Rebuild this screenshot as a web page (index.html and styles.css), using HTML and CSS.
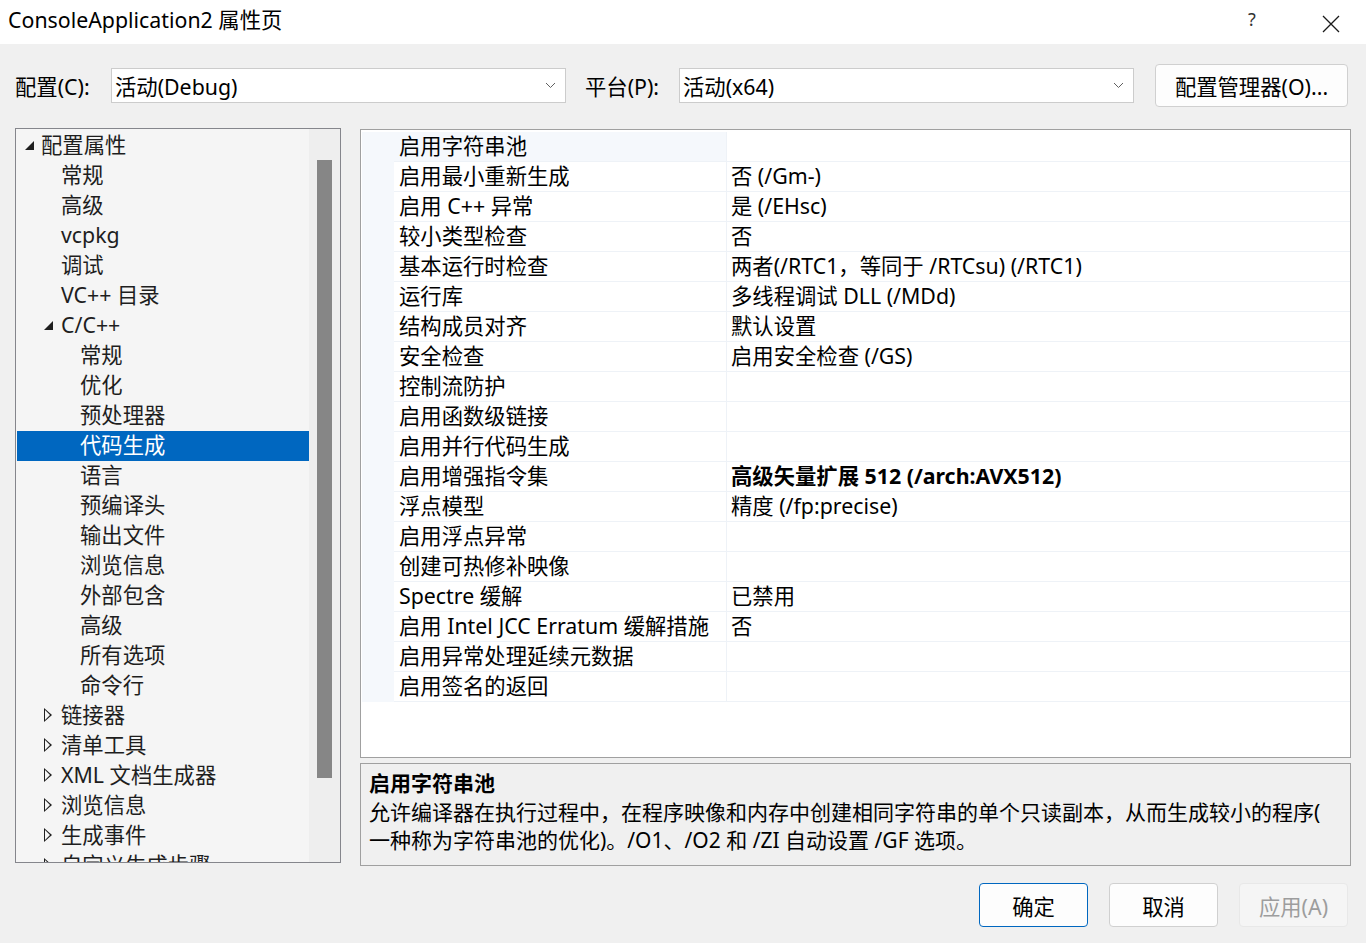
FILE: index.html
```html
<!DOCTYPE html>
<html lang="zh-CN">
<head>
<meta charset="utf-8">
<title>ConsoleApplication2 属性页</title>
<link rel="stylesheet" href="styles.css">
</head>
<body>
<div class="titlebar">
  <div class="title">ConsoleApplication2 属性页</div>
  <div class="tb-help">?</div>
  <div class="tb-close"><svg width="18" height="18" viewBox="0 0 18 18"><path d="M1 1 L17 17 M17 1 L1 17" stroke="#1a1a1a" stroke-width="1.3" fill="none"/></svg></div>
</div>

<div class="configrow">
  <div class="lbl lbl1">配置(C):</div>
  <div class="combo"><span>活动(Debug)</span><svg class="chev" width="11" height="7" viewBox="0 0 11 7"><path d="M1 1 L5.5 5.5 L10 1" stroke="#606060" stroke-width="1" fill="none"/></svg></div>
  <div class="lbl lbl2">平台(P):</div>
  <div class="combo"><span>活动(x64)</span><svg class="chev" width="11" height="7" viewBox="0 0 11 7"><path d="M1 1 L5.5 5.5 L10 1" stroke="#606060" stroke-width="1" fill="none"/></svg></div>
  <button class="btn cfgmgr">配置管理器(O)...</button>
</div>

<div class="main">
  <div class="tree">
    <div class="tree-list">
      <div class="ti l0"><span class="exp"></span>配置属性</div>
      <div class="ti l1">常规</div>
      <div class="ti l1">高级</div>
      <div class="ti l1">vcpkg</div>
      <div class="ti l1">调试</div>
      <div class="ti l1">VC++ 目录</div>
      <div class="ti l1e"><span class="exp"></span>C/C++</div>
      <div class="ti l2">常规</div>
      <div class="ti l2">优化</div>
      <div class="ti l2">预处理器</div>
      <div class="ti l2 sel">代码生成</div>
      <div class="ti l2">语言</div>
      <div class="ti l2">预编译头</div>
      <div class="ti l2">输出文件</div>
      <div class="ti l2">浏览信息</div>
      <div class="ti l2">外部包含</div>
      <div class="ti l2">高级</div>
      <div class="ti l2">所有选项</div>
      <div class="ti l2">命令行</div>
      <div class="ti l1e"><span class="col"></span>链接器</div>
      <div class="ti l1e"><span class="col"></span>清单工具</div>
      <div class="ti l1e"><span class="col"></span>XML 文档生成器</div>
      <div class="ti l1e"><span class="col"></span>浏览信息</div>
      <div class="ti l1e"><span class="col"></span>生成事件</div>
      <div class="ti l1e"><span class="col"></span>自定义生成步骤</div>
    </div>
    <div class="vscroll"><div class="thumb"></div></div>
  </div>

  <div class="rightcol">
    <div class="grid">
      <div class="row first"><div class="gut"></div><div class="name">启用字符串池</div><div class="val"></div></div>
      <div class="row"><div class="gut"></div><div class="name">启用最小重新生成</div><div class="val">否 (/Gm-)</div></div>
      <div class="row"><div class="gut"></div><div class="name">启用 C++ 异常</div><div class="val">是 (/EHsc)</div></div>
      <div class="row"><div class="gut"></div><div class="name">较小类型检查</div><div class="val">否</div></div>
      <div class="row"><div class="gut"></div><div class="name">基本运行时检查</div><div class="val">两者(/RTC1，等同于 /RTCsu) (/RTC1)</div></div>
      <div class="row"><div class="gut"></div><div class="name">运行库</div><div class="val">多线程调试 DLL (/MDd)</div></div>
      <div class="row"><div class="gut"></div><div class="name">结构成员对齐</div><div class="val">默认设置</div></div>
      <div class="row"><div class="gut"></div><div class="name">安全检查</div><div class="val">启用安全检查 (/GS)</div></div>
      <div class="row"><div class="gut"></div><div class="name">控制流防护</div><div class="val"></div></div>
      <div class="row"><div class="gut"></div><div class="name">启用函数级链接</div><div class="val"></div></div>
      <div class="row"><div class="gut"></div><div class="name">启用并行代码生成</div><div class="val"></div></div>
      <div class="row"><div class="gut"></div><div class="name">启用增强指令集</div><div class="val bold">高级矢量扩展 512 (/arch:AVX512)</div></div>
      <div class="row"><div class="gut"></div><div class="name">浮点模型</div><div class="val">精度 (/fp:precise)</div></div>
      <div class="row"><div class="gut"></div><div class="name">启用浮点异常</div><div class="val"></div></div>
      <div class="row"><div class="gut"></div><div class="name">创建可热修补映像</div><div class="val"></div></div>
      <div class="row"><div class="gut"></div><div class="name">Spectre 缓解</div><div class="val">已禁用</div></div>
      <div class="row"><div class="gut"></div><div class="name">启用 Intel JCC Erratum 缓解措施</div><div class="val">否</div></div>
      <div class="row"><div class="gut"></div><div class="name">启用异常处理延续元数据</div><div class="val"></div></div>
      <div class="row"><div class="gut"></div><div class="name">启用签名的返回</div><div class="val"></div></div>
    </div>
    <div class="desc">
      <div class="desc-title">启用字符串池</div>
      <div class="desc-line">允许编译器在执行过程中，在程序映像和内存中创建相同字符串的单个只读副本，从而生成较小的程序(</div>
      <div class="desc-line">一种称为字符串池的优化)。/O1、/O2 和 /ZI 自动设置 /GF 选项。</div>
    </div>
  </div>
</div>

<div class="buttons">
  <button class="btn dlg ok">确定</button>
  <button class="btn dlg">取消</button>
  <button class="btn dlg disabled">应用(A)</button>
</div>
</body>
</html>
```
FILE: styles.css
```css
html, body {
  margin: 0;
  padding: 0;
}
body {
  width: 1366px;
  height: 943px;
  background: #f0f0f0;
  font-family: "Noto Sans", "Noto Sans CJK SC", sans-serif;
  font-size: 21.33px;
  color: #000;
  overflow: hidden;
}
.titlebar {
  height: 44px;
  background: #fff;
  display: flex;
  align-items: center;
}
.title {
  padding-left: 8px;
  font-size: 21.33px;
  line-height: 40px;
  flex: 1;
  margin-top: -4px;
}
.tb-help {
  width: 20px;
  font-size: 18px;
  color: #333;
  text-align: center;
  margin-right: 60px;
  margin-top: -6px;
}
.tb-close {
  width: 18px;
  height: 18px;
  margin-right: 26px;
  margin-top: -6px;
}
.configrow {
  margin-top: 20px;
  height: 43px;
  display: flex;
  align-items: center;
  padding-left: 15px;
}
.lbl {
  line-height: 30px;
  color: #000;
  padding-top: 2px;
}
.lbl1 { width: 96px; }
.lbl2 { width: 94px; margin-left: 19px; }
.combo {
  width: 450px;
  height: 33px;
  border: 1px solid #cccccc;
  background: #fff;
  display: flex;
  align-items: center;
  padding-left: 3px;
  box-sizing: content-box;
}
.combo span {
  flex: 1;
  line-height: 30px;
  padding-top: 2px;
}
.chev {
  margin-right: 9px;
}
.btn {
  font-family: inherit;
  font-size: 21.33px;
  color: #000;
  background: #fdfdfd;
  border: 1px solid #d0d0d0;
  border-radius: 4px;
  padding: 0;
}
.cfgmgr {
  margin-left: 21px;
  width: 193px;
  height: 43px;
}
.main {
  margin-top: 21px;
  display: flex;
  padding-left: 15px;
  gap: 19px;
}
.tree {
  width: 324px;
  height: 733px;
  border: 1px solid #85868c;
  background: #f5f5f5;
  display: flex;
  overflow: hidden;
}
.tree-list {
  flex: 1;
  padding-top: 2px;
  padding-left: 1px;
  overflow: hidden;
}
.ti {
  height: 30px;
  line-height: 28px;
  white-space: nowrap;
  color: #1e1e1e;
  position: relative;
}
.l0 { padding-left: 24px; }
.l1 { padding-left: 44px; }
.l1e { padding-left: 44px; }
.l2 { padding-left: 63px; }
.sel {
  background: #0067c0;
  color: #fff;
}
.exp {
  position: absolute;
  top: 10px;
  width: 0;
  height: 0;
  border-style: solid;
  border-width: 0 0 9px 9px;
  border-color: transparent transparent #1e1e1e transparent;
}
.l0 .exp { left: 8px; }
.l1e .exp { left: 27px; }
.col {
  position: absolute;
  left: 27px;
  top: 7px;
  width: 0;
  height: 0;
  border-style: solid;
  border-width: 7px 0 7px 8px;
  border-color: transparent transparent transparent #1e1e1e;
}
.col::after {
  content: "";
  position: absolute;
  left: -7px;
  top: -5px;
  border-style: solid;
  border-width: 5px 0 5px 5.7px;
  border-color: transparent transparent transparent #f5f5f5;
}
.vscroll {
  width: 31px;
  background: #eeeeee;
  padding-top: 31px;
  box-sizing: border-box;
  display: flex;
  justify-content: center;
}
.thumb {
  width: 15px;
  height: 618px;
  background: #868686;
}
.rightcol {
  display: flex;
  flex-direction: column;
  gap: 5px;
}
.grid {
  width: 989px;
  height: 625px;
  border: 1px solid #a0a0a0;
  background: #fff;
  padding-top: 2px;
  margin-top: 1px;
}
.row {
  display: flex;
  height: 30px;
}
.gut {
  width: 32px;
  margin-left: 1px;
  background: #f5f8fc;
}
.name {
  width: 333px;
  padding-left: 5px;
  box-sizing: border-box;
  line-height: 28px;
  border-bottom: 1px solid #eef2f7;
  border-right: 1px solid #eef2f7;
  white-space: nowrap;
}
.first .name { background: #f5f8fc; }
.val {
  flex: 1;
  padding-left: 4px;
  line-height: 28px;
  border-bottom: 1px solid #eef2f7;
  white-space: nowrap;
}
.bold { font-weight: bold; }
.desc {
  width: 981px;
  height: 91px;
  border: 1px solid #a0a0a0;
  background: #f0f0f0;
  padding: 5px 0 5px 8px;
  font-size: 21px;
}
.desc-title {
  font-weight: bold;
  line-height: 29px;
}
.desc-line {
  line-height: 28px;
  white-space: nowrap;
}
.buttons {
  margin-top: 17px;
  display: flex;
  justify-content: flex-end;
  gap: 21px;
  padding-right: 18px;
}
.dlg {
  width: 109px;
  height: 44px;
}
.ok {
  border-color: #0067c0;
}
.disabled {
  background: #f5f5f5;
  border-color: #e8e8e8;
  color: #9d9d9d;
}
```
